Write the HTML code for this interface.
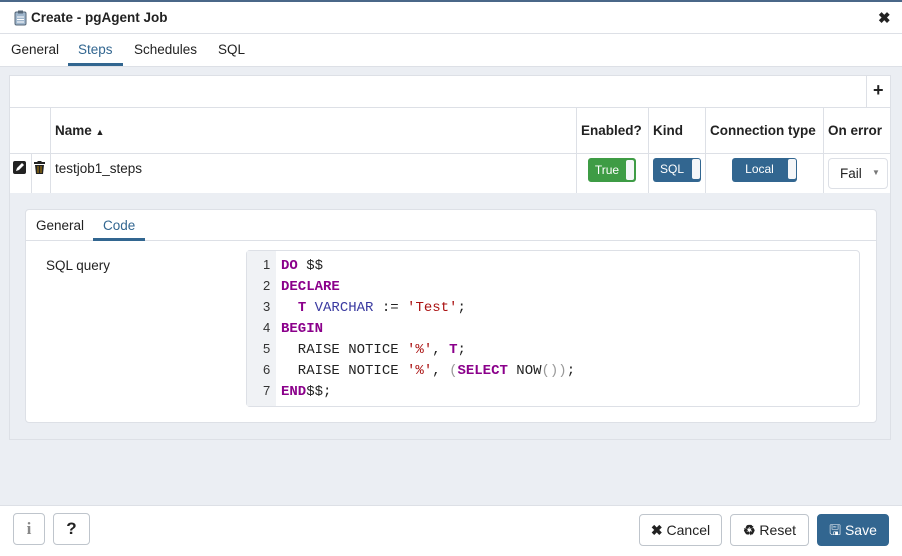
<!DOCTYPE html>
<html><head><style>
*{box-sizing:border-box;margin:0;padding:0}
body{width:902px;height:556px;overflow:hidden;font-family:"Liberation Sans",sans-serif;font-size:13.5px;color:#222;background:#fff;position:relative}
.a{position:absolute}
.b{font-weight:bold}
.tog{position:absolute;border-radius:3px;color:#fff;font-size:12px;text-align:center;line-height:22px;height:24px}
.tog i{position:absolute;right:1px;top:1px;width:8px;height:20px;background:#f4f6f8;border-radius:2px}
.btn{position:absolute;border:1px solid #bfc5cc;border-radius:4px;background:#fff;height:32px;line-height:30px;text-align:center;font-size:14px}
.code{font-family:"Liberation Mono",monospace;font-size:14px;line-height:21px;white-space:pre}
.k{color:#8b008b;font-weight:bold}.s{color:#a11}.t{color:#3a3aa0}.g{color:#999}
</style></head><body>
<div class="a" style="left:0;top:0;width:902px;height:2px;background:#4a6788"></div>
<div class="a" style="left:0;top:2px;width:902px;height:32px;border-bottom:1px solid #dde0e6"></div>
<svg class="a" style="left:14px;top:10px" width="13" height="16" viewBox="0 0 13 16"><rect x="1" y="2" width="11" height="13" rx="1.5" fill="#9fb6cc" stroke="#567" stroke-width="1"/><rect x="4" y="0.5" width="5" height="3" fill="#567"/><path d="M3 7h7M3 9.5h7M3 12h7" stroke="#fff" stroke-width="1"/></svg>
<div class="a b" style="left:31px;top:10px;font-size:13.5px">Create - pgAgent Job</div>
<div class="a b" style="left:878px;top:9px;font-size:15px">✖</div>
<div class="a" style="left:11px;top:42px">General</div>
<div class="a" style="left:78px;top:42px;color:#326690">Steps</div>
<div class="a" style="left:68px;top:63px;width:55px;height:3px;background:#326690"></div>
<div class="a" style="left:134px;top:42px">Schedules</div>
<div class="a" style="left:218px;top:42px">SQL</div>
<div class="a" style="left:0;top:66px;width:902px;height:439px;background:#ebeef3;border-top:1px solid #dde0e6"></div>
<div class="a" style="left:9px;top:75px;width:882px;height:365px;background:#fff;border:1px solid #dde0e6"></div>
<div class="a" style="left:10px;top:107px;width:880px;height:1px;background:#dde0e6"></div>
<div class="a" style="left:866px;top:76px;width:1px;height:31px;background:#dde0e6"></div>
<div class="a b" style="left:873px;top:80px;font-size:18px">+</div>
<div class="a" style="left:10px;top:153px;width:880px;height:1px;background:#dde0e6"></div>
<div class="a" style="left:10px;top:193px;width:880px;height:246px;background:#ebeef3"></div>
<div class="a" style="left:31px;top:153px;width:1px;height:40px;background:#dde0e6"></div>
<div class="a" style="left:50px;top:108px;width:1px;height:85px;background:#dde0e6"></div>
<div class="a" style="left:576px;top:108px;width:1px;height:85px;background:#dde0e6"></div>
<div class="a" style="left:648px;top:108px;width:1px;height:85px;background:#dde0e6"></div>
<div class="a" style="left:705px;top:108px;width:1px;height:85px;background:#dde0e6"></div>
<div class="a" style="left:823px;top:108px;width:1px;height:85px;background:#dde0e6"></div>
<div class="a b" style="left:55px;top:123px">Name <span style="font-size:9px">▲</span></div>
<div class="a b" style="left:581px;top:123px">Enabled?</div>
<div class="a b" style="left:653px;top:123px">Kind</div>
<div class="a b" style="left:710px;top:123px">Connection type</div>
<div class="a b" style="left:828px;top:123px">On error</div>
<svg class="a" style="left:13px;top:161px" width="13" height="13"><rect width="13" height="13" rx="2" fill="#222"/><path d="M3 10l1-3 5-5 2 2-5 5z" fill="#fff"/></svg>
<svg class="a" style="left:34px;top:161px" width="11" height="13"><rect x="0" y="1" width="11" height="2" fill="#222"/><rect x="3.5" y="0" width="4" height="2" fill="#222"/><path d="M1 4h9l-1 9H2z" fill="#222"/><path d="M4 5v7M7 5v7" stroke="#b8860b" stroke-width="1"/></svg>
<div class="a" style="left:55px;top:161px">testjob1_steps</div>
<div class="tog" style="left:588px;top:158px;width:48px;background:#3e9c45;border:1px solid #3e9c45;padding-right:10px">True<i></i></div>
<div class="tog" style="left:653px;top:158px;width:48px;background:#326690;padding-right:10px">SQL<i></i></div>
<div class="tog" style="left:732px;top:158px;width:65px;background:#326690;padding-right:10px">Local<i></i></div>
<div class="a" style="left:828px;top:158px;width:60px;height:31px;border:1px solid #dde0e6;border-radius:4px;background:#fff"></div>
<div class="a" style="left:840px;top:166px">Fail</div>
<div class="a" style="left:872px;top:168px;font-size:8px;color:#777">▼</div>
<div class="a" style="left:25px;top:209px;width:852px;height:214px;background:#fff;border:1px solid #dde0e6;border-radius:4px"></div>
<div class="a" style="left:26px;top:240px;width:850px;height:1px;background:#dde0e6"></div>
<div class="a" style="left:36px;top:218px">General</div>
<div class="a" style="left:103px;top:218px;color:#326690">Code</div>
<div class="a" style="left:93px;top:238px;width:52px;height:3px;background:#326690"></div>
<div class="a" style="left:46px;top:258px">SQL query</div>
<div class="a" style="left:246px;top:250px;width:614px;height:157px;border:1px solid #dde0e6;border-radius:4px;background:#fff"></div>
<div class="a" style="left:247px;top:251px;width:29px;height:155px;background:#f0f2f5"></div>
<div class="a code" style="left:263px;top:254px;color:#333;font-family:'Liberation Sans',sans-serif;font-size:13px">1
2
3
4
5
6
7</div>
<div class="a code" style="left:281px;top:256px;color:#222"><span class="k">DO</span> $$
<span class="k">DECLARE</span>
  <span class="k">T</span> <span class="t">VARCHAR</span> := <span class="s">'Test'</span>;
<span class="k">BEGIN</span>
  RAISE NOTICE <span class="s">'%'</span>, <span class="k">T</span>;
  RAISE NOTICE <span class="s">'%'</span>, <span class="g">(</span><span class="k">SELECT</span> NOW<span class="g">())</span>;
<span class="k">END</span>$$;</div>
<div class="a" style="left:0;top:505px;width:902px;height:1px;background:#dde0e6"></div>
<div class="btn b" style="left:13px;top:513px;width:32px;color:#888;font-family:'Liberation Serif',serif;font-size:17px">i</div>
<div class="btn b" style="left:53px;top:513px;width:37px;font-size:17px">?</div>
<div class="btn" style="left:639px;top:514px;width:83px"><b>✖</b> Cancel</div>
<div class="btn" style="left:730px;top:514px;width:79px"><b>♻</b> Reset</div>
<div class="btn" style="left:817px;top:514px;width:72px;background:#326690;border-color:#326690;color:#fff">🖫 Save</div>
</body></html>
